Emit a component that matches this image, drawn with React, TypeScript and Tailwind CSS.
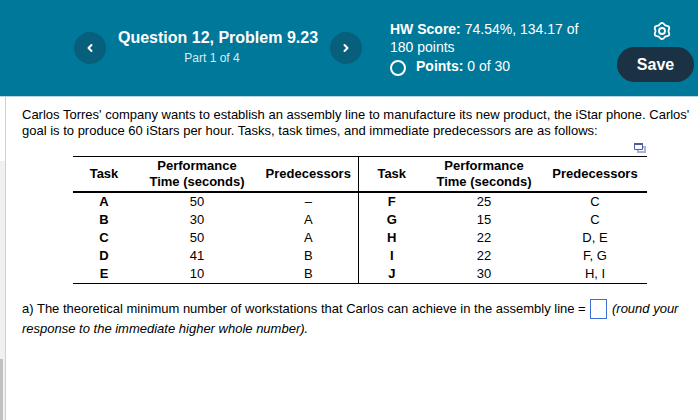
import React from "react";
import { ChevronLeft, ChevronRight } from "lucide-react";

type Row = {
  task: string;
  time: number;
  predecessors: string;
};

const leftTasks: Row[] = [
  { task: "A", time: 50, predecessors: "–" },
  { task: "B", time: 30, predecessors: "A" },
  { task: "C", time: 50, predecessors: "A" },
  { task: "D", time: 41, predecessors: "B" },
  { task: "E", time: 10, predecessors: "B" },
];

const rightTasks: Row[] = [
  { task: "F", time: 25, predecessors: "C" },
  { task: "G", time: 15, predecessors: "C" },
  { task: "H", time: 22, predecessors: "D, E" },
  { task: "I", time: 22, predecessors: "F, G" },
  { task: "J", time: 30, predecessors: "H, I" },
];

// six rounded teeth, one of them pointing straight up
const gearOutline = Array.from({ length: 72 }, (_, i) => {
  const angle = (i * Math.PI) / 36;
  const radius = 7.3 + 0.8 * Math.cos(6 * angle);
  const x = 9 + radius * Math.sin(angle);
  const y = 9 - radius * Math.cos(angle);
  return `${x.toFixed(2)},${y.toFixed(2)}`;
}).join(" ");

const GearIcon = () => (
  <svg viewBox="0 0 18 18" className="block size-[18px]" fill="none" stroke="currentColor">
    <polygon points={gearOutline} strokeWidth="1.8" strokeLinejoin="round" />
    <circle cx="9" cy="9" r="3" strokeWidth="1.8" />
  </svg>
);

const PopoutIcon = () => (
  <svg viewBox="0 0 12 10" className="block h-2.5 w-3">
    <path d="M4 4h7v5H4z" fill="#fff" stroke="#aab2d8" strokeWidth="2" />
    <path d="M.5 .5h8v6h-8z" fill="#fff" stroke="#4a5ba8" />
    <path d="M0 0h9v2H0z" fill="#4a5ba8" />
  </svg>
);

const HeaderCells = () => (
  <>
    <th scope="col">Task</th>
    <th scope="col">
      Performance
      <br />
      Time (seconds)
    </th>
    <th scope="col">Predecessors</th>
  </>
);

const BodyCells = ({ row }: { row: Row }) => (
  <>
    <th scope="row">{row.task}</th>
    <td>{row.time}</td>
    <td>{row.predecessors}</td>
  </>
);

const Header = () => (
  <header className="flex h-[97px] items-center border-b border-[#b8d4e0] bg-[#00789a] pr-1 text-white">
    <nav className="ml-[74px] flex items-center">
      <button
        aria-label="Previous question"
        className="flex size-8 items-center justify-center rounded-full bg-[#075f7c]"
      >
        <ChevronLeft className="size-3" strokeWidth={4} />
      </button>
      <div className="w-56 pb-1 text-center">
        <h1 className="text-base leading-6 font-bold">Question 12, Problem 9.23</h1>
        <p className="pr-3 text-xs leading-4 text-[#dcebf0]">Part 1 of 4</p>
      </div>
      <button
        aria-label="Next question"
        className="flex size-8 items-center justify-center rounded-full bg-[#075f7c]"
      >
        <ChevronRight className="size-3" strokeWidth={4} />
      </button>
    </nav>

    <div className="ml-7 w-[200px] text-sm leading-[18px]">
      <p>
        <b>HW Score:</b> 74.54%, 134.17 of 180 points
      </p>
      <p className="flex items-center gap-2.5">
        <span className="mt-1 size-4 rounded-full border-2 border-white" />
        <span>
          <b>Points:</b> 0 of 30
        </span>
      </p>
    </div>

    <div className="ml-auto flex flex-col items-center pt-2">
      <button aria-label="Settings" className="mb-[7px] ml-3">
        <GearIcon />
      </button>
      <button className="h-[35px] w-[77px] rounded-full bg-[#1a3244] text-base font-bold">
        Save
      </button>
    </div>
  </header>
);

const App = () => {
  return (
    <div className="flex min-h-screen flex-col bg-white font-['Liberation_Sans',Arial,sans-serif] text-black">
      <Header />

      <div className="flex flex-1">
        {/* Scroll gutter of the side panel */}
        <div className="flex w-1.5 shrink-0 flex-col border-r border-[#c9cfe0] pt-16">
          <div className="flex flex-1 flex-col justify-end bg-[#f1f1f1]">
            <div className="h-[61px] w-[3px] bg-[#c1c1c1]" />
          </div>
        </div>

        <main className="flex-1 pt-2.5 pl-4 text-[13px]">
          <p className="leading-4">
            Carlos Torres' company wants to establish an assembly line to manufacture its new
            product, the iStar phone. Carlos' goal is to produce 60 iStars per hour. Tasks, task
            times, and immediate predecessors are as follows:
          </p>

          <div className="mt-1 mr-[51px] ml-[51px]">
            <button
              aria-label="Open table in a new window"
              className="mr-px ml-auto block pb-[3px]"
            >
              <PopoutIcon />
            </button>
            <table className="w-full table-fixed border-collapse text-center [&_td]:p-0 [&_th]:p-0">
              <colgroup>
                <col className="w-[62px]" />
                <col className="w-[124px]" />
                <col className="w-[99px] border-r border-black" />
                <col className="w-[67px]" />
                <col className="w-[118px]" />
                <col className="w-[104px]" />
              </colgroup>
              <thead className="border-t border-b-2 border-black leading-4">
                <tr className="h-[35px]">
                  <HeaderCells />
                  <HeaderCells />
                </tr>
              </thead>
              <tbody className="border-b border-black leading-[18px]">
                {leftTasks.map((row, i) => (
                  <tr key={row.task}>
                    <BodyCells row={row} />
                    <BodyCells row={rightTasks[i]} />
                  </tr>
                ))}
              </tbody>
            </table>
          </div>

          <p className="mt-[15px] leading-[19px]">
            <label htmlFor="answer">
              a) The theoretical minimum number of workstations that Carlos can achieve in the
              assembly line =
            </label>{" "}
            <input
              id="answer"
              type="text"
              className="mx-px h-5 w-[17px] border border-[#3b6fd6] align-middle"
            />{" "}
            <i>(round your response to the immediate higher whole number).</i>
          </p>
        </main>
      </div>
    </div>
  );
};

export default App;
